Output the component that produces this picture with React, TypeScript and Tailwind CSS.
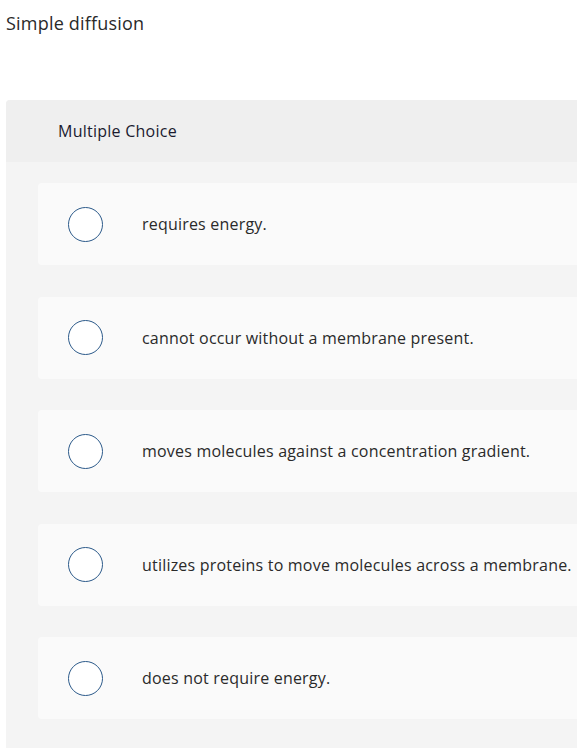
import React from "react";

const options = [
  "requires energy.",
  "cannot occur without a membrane present.",
  "moves molecules against a concentration gradient.",
  "utilizes proteins to move molecules across a membrane.",
  "does not require energy.",
];

export default function App() {
  return (
    <div className="w-[577px] h-[748px] overflow-hidden bg-white text-[#333]" style={{ fontFamily: '"Open Sans", "Liberation Sans", sans-serif' }}>
      <div className="pl-[6px] pt-[10px] h-[100px] text-[18px] leading-[26px] tracking-[0.2px] text-[#2a2a2a]">Simple diffusion</div>
      <div className="ml-[6px] w-[620px] rounded-tl-[4px] overflow-hidden bg-[#f4f4f4] h-[648px]">
        <div className="h-[62px] bg-[#efefef] flex items-center pl-[52px] text-[16px] tracking-[0.25px] text-[#1b1b2f]">Multiple Choice</div>
        <div className="pl-[32px] pt-[21px] flex flex-col gap-[31.5px]">
          {options.map((o) => (
            <div key={o} className="h-[82px] bg-[#fafafa] rounded-[4px] flex items-center">
              <div className="ml-[30px] w-[35px] h-[35px] rounded-full border-[1.5px] border-[#2c5a8a] bg-white shrink-0" />
              <div className="ml-[39px] text-[16px] tracking-[0.2px] text-[#2a2a2a] whitespace-nowrap">{o}</div>
            </div>
          ))}
        </div>
      </div>
    </div>
  );
}
